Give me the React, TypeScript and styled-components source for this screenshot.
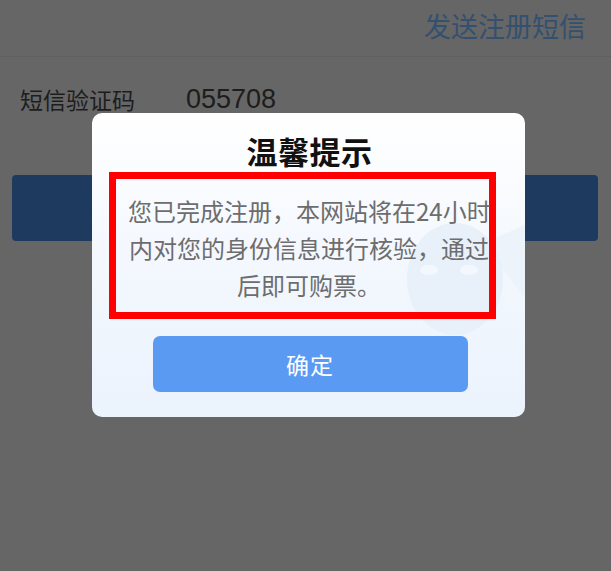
import React from 'react'
import styled, { createGlobalStyle } from 'styled-components'

const GlobalStyle = createGlobalStyle`
  html, body {
    margin: 0;
    padding: 0;
    background: #666666;
  }
  body {
    font-family: "Noto Sans CJK SC", "Noto Sans", sans-serif;
  }
`

const Page = styled.div`
  position: relative;
  width: 611px;
  height: 571px;
  overflow: hidden;
  background: #666666;
`

const Header = styled.div`
  height: 57px;
  display: flex;
  align-items: center;
  justify-content: flex-end;
  padding: 0 25px 6px 0;
  box-sizing: border-box;
  border-bottom: 1px solid #606060;
`

const SendLink = styled.span`
  font-size: 27px;
  color: #34506f;
  line-height: 1;
`

const CodeRow = styled.div`
  display: flex;
  align-items: center;
  gap: 51px;
  padding: 24px 0 0 20px;
  height: 36px;
  font-size: 23px;
  color: #1d1d1d;
`

const CodeValue = styled.span`
  font-family: "Liberation Sans", "Noto Sans", sans-serif;
  font-size: 27px;
`

const SubmitBar = styled.div`
  margin: 58px 13px 0 12px;
  height: 66px;
  border-radius: 4px;
  background: #1f3a5f;
`

const Dialog = styled.div`
  position: absolute;
  left: 92px;
  top: 113px;
  width: 433px;
  height: 304px;
  box-sizing: border-box;
  border-radius: 10px;
  overflow: hidden;
  background: linear-gradient(180deg, #ffffff 0%, #f4f8fe 45%, #ebf3fd 100%);
  display: flex;
  flex-direction: column;
  align-items: flex-start;
  padding-top: 17px;
`

const Decoration = styled.svg`
  position: absolute;
  right: 0;
  top: 90px;
`

const Title = styled.h2`
  position: relative;
  align-self: center;
  margin: 0 0 0 2px;
  font-size: 31px;
  font-weight: 700;
  line-height: 42px;
  color: #111111;
  letter-spacing: 0.5px;
`

const Highlight = styled.div`
  position: relative;
  margin: 0 0 0 17px;
  width: 387px;
  height: 147px;
  box-sizing: border-box;
  border: 7px solid #ff0000;
  padding: 13px 0 0 12px;
`

const Message = styled.p`
  margin: 0;
  width: 362px;
  text-align: center;
  white-space: nowrap;
  font-size: 24px;
  line-height: 37px;
  color: #6d6d6d;
`

const ConfirmButton = styled.button`
  position: relative;
  align-self: center;
  margin: 17px 0 0 3px;
  width: 315px;
  height: 56px;
  border: none;
  border-radius: 7px;
  background: #5a9af2;
  color: #ffffff;
  font-family: "Noto Sans CJK SC", sans-serif;
  font-size: 23px;
  letter-spacing: 1px;
`

export default function App() {
  return (
    <>
      <GlobalStyle />
      <Page>
        <Header>
          <SendLink>发送注册短信</SendLink>
        </Header>
        <CodeRow>
          <span>短信验证码</span>
          <CodeValue>055708</CodeValue>
        </CodeRow>
        <SubmitBar />
        <Dialog>
          <Decoration width="130" height="140" viewBox="0 0 130 140">
            <path d="M88 40 L130 22 L130 96 Z" fill="#ecf3fb" />
            <ellipse cx="60" cy="76" rx="48" ry="56" fill="#e8f0fa" />
            <ellipse cx="34" cy="67" rx="9" ry="5" fill="#f3f8fe" />
            <ellipse cx="74" cy="67" rx="9" ry="5" fill="#f3f8fe" />
          </Decoration>
          <Title>温馨提示</Title>
          <Highlight>
            <Message>
              您已完成注册，本网站将在24小时
              <br />
              内对您的身份信息进行核验，通过
              <br />
              后即可购票。
            </Message>
          </Highlight>
          <ConfirmButton>确定</ConfirmButton>
        </Dialog>
      </Page>
    </>
  )
}
